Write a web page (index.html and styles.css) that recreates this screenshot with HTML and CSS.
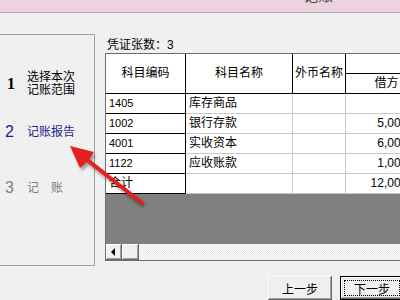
FILE: index.html
```html
<!DOCTYPE html>
<html lang="zh">
<head>
    <meta charset="UTF-8">
    <title>记账</title>
    <link rel="stylesheet" href="styles.css">
</head>
<body>
    <div class="titlebar">
        <span class="title-text">记账</span>
    </div>

    <div class="main">
        <div class="steps">
            <div class="step step-done">
                <span class="step-num num-serif">1</span>
                <span class="step-text">选择本次<br>记账范围</span>
            </div>
            <div class="step step-current">
                <span class="step-num">2</span>
                <span class="step-text">记账报告</span>
            </div>
            <div class="step step-todo">
                <span class="step-num">3</span>
                <span class="step-text">记　账</span>
            </div>
        </div>

        <div class="report">
            <div class="count-label">凭证张数：3</div>

            <div class="grid">
                <table class="voucher-table">
                    <thead>
                        <tr>
                            <th rowspan="2" class="col-code fixed">科目编码</th>
                            <th rowspan="2" class="col-name">科目名称</th>
                            <th rowspan="2" class="col-cur">外币名称</th>
                            <th colspan="2" class="col-amt-group">金额</th>
                        </tr>
                        <tr>
                            <th class="col-amt">借方</th>
                            <th class="col-amt">贷方</th>
                        </tr>
                    </thead>
                    <tbody>
                        <tr>
                            <td class="fixed num">1405</td>
                            <td>库存商品</td>
                            <td></td>
                            <td class="amount"></td>
                            <td class="amount">12,000.00</td>
                        </tr>
                        <tr>
                            <td class="fixed num">1002</td>
                            <td>银行存款</td>
                            <td></td>
                            <td class="amount">5,000.00</td>
                            <td class="amount"></td>
                        </tr>
                        <tr>
                            <td class="fixed num">4001</td>
                            <td>实收资本</td>
                            <td></td>
                            <td class="amount">6,000.00</td>
                            <td class="amount"></td>
                        </tr>
                        <tr>
                            <td class="fixed num">1122</td>
                            <td>应收账款</td>
                            <td></td>
                            <td class="amount">1,000.00</td>
                            <td class="amount"></td>
                        </tr>
                        <tr>
                            <td class="fixed">合计</td>
                            <td></td>
                            <td></td>
                            <td class="amount">12,000.00</td>
                            <td class="amount">12,000.00</td>
                        </tr>
                    </tbody>
                </table>
                <div class="grid-empty"></div>
                <div class="hscroll">
                    <span class="scroll-btn"><span class="arrow-left"></span></span>
                    <span class="scroll-thumb"></span>
                </div>
            </div>

            <div class="actions">
                <button type="button" class="btn">上一步</button>
                <button type="button" class="btn btn-default"><span class="focus-ring">下一步</span></button>
            </div>
        </div>
    </div>

    <!-- 标注箭头，叠加在页面上 -->
    <svg class="callout" width="400" height="300" viewBox="0 0 400 300">
        <defs>
            <filter id="soft" x="-20%" y="-20%" width="140%" height="140%">
                <feGaussianBlur stdDeviation="1.6"/>
            </filter>
        </defs>
        <g transform="translate(2 3)" fill="#000" opacity="0.35" filter="url(#soft)">
            <line x1="142" y1="203" x2="86" y2="159" stroke="#000" stroke-width="4.5"/>
            <polygon points="70,146 94,152 89,160 80,168"/>
        </g>
        <line x1="142" y1="203" x2="86" y2="159" stroke="#e3201e" stroke-width="4" stroke-linecap="round"/>
        <polygon points="70,146 94,152 89,160 80,168" fill="#e3201e"/>
    </svg>
</body>
</html>
```

FILE: styles.css
```css
:root {
    --window-bg: #F0F0F0;
    --title-bg: #ECD3DF;
    --title-border: #B4A6AD;
    --panel-border: #A0A0A0;
    --grid-line: #C8C8C8;
    --grid-dark: #000000;
    --grid-empty: #808080;
    --step-current: #1C1C8C;
    --step-todo: #808080;
    --cjk: "Liberation Sans", "Noto Sans CJK SC", sans-serif;
}

* {
    margin: 0;
    padding: 0;
    box-sizing: border-box;
}

body {
    width: 400px;
    height: 300px;
    overflow: hidden;
    position: relative;
    background: var(--window-bg);
    font-family: var(--cjk);
    font-size: 12px;
    color: #000;
}

/* 标题栏 */
.titlebar {
    height: 13px;
    background: var(--title-bg);
    border-bottom: 1px solid var(--title-border);
    padding-left: 303px;
    overflow: hidden;
}

.title-text {
    display: block;
    margin-top: -12px;
    font-size: 15px;
    line-height: 16px;
    color: #505050;
}

.main {
    display: flex;
    align-items: flex-start;
}

/* 左侧步骤 */
.steps {
    flex: none;
    width: 97px;
    height: 232px;
    margin-top: 21px;
    margin-left: -2px;
    border: 1px solid var(--panel-border);
    display: flex;
    flex-direction: column;
}

.step {
    display: flex;
    align-items: center;
    padding-left: 6px;
}

.step-done { margin-top: 36px; }
.step-current { margin-top: 27px; color: var(--step-current); }
.step-todo { margin-top: 40px; color: var(--step-todo); }

.step-num {
    width: 22px;
    font-family: "Liberation Sans", sans-serif;
    font-size: 16px;
    line-height: 16px;
}

.num-serif {
    font-family: "Liberation Serif", serif;
    font-weight: bold;
    padding-left: 2px;
}

.step-text {
    line-height: 13px;
}

/* 右侧报告 */
.report {
    flex: none;
    margin-left: 10px;
    margin-top: 24px;
}

.count-label {
    line-height: 16px;
    padding-left: 2px;
}

.grid {
    width: 520px;
    border: 1px solid #6E6E6E;
    background: #FFFFFF;
}

.voucher-table {
    border-collapse: separate;
    border-spacing: 0;
    table-layout: fixed;
}

.voucher-table th,
.voucher-table td {
    font-weight: normal;
    line-height: 19px;
    padding: 0 3px;
    white-space: nowrap;
    overflow: hidden;
    border-right: 1px solid var(--grid-line);
    border-bottom: 1px solid var(--grid-line);
}

.voucher-table th {
    text-align: center;
    border-color: var(--grid-dark);
}

.voucher-table th.col-cur {
    padding: 0;
}

.col-code { width: 80px; }
.col-name { width: 107px; }
.col-cur { width: 53px; }
.col-amt { width: 82px; }

.voucher-table td.fixed {
    border-color: var(--grid-dark);
}

.num {
    font-size: 11px;
}

.amount {
    text-align: right;
}

.grid-empty {
    height: 50px;
    background: var(--grid-empty);
}

/* 横向滚动条 */
.hscroll {
    height: 16px;
    display: flex;
    background: repeating-conic-gradient(#FFFFFF 0 25%, #E6E6E6 0 50%) 0 0 / 2px 2px;
}

.scroll-btn,
.scroll-thumb {
    display: flex;
    align-items: center;
    justify-content: center;
    width: 16px;
    height: 16px;
    background: var(--window-bg);
    box-shadow: inset -1px -1px #696969, inset 1px 1px #FFFFFF, inset -2px -2px #A0A0A0;
}

.scroll-thumb {
    width: 17px;
}

.arrow-left {
    width: 0;
    height: 0;
    border-top: 4px solid transparent;
    border-bottom: 4px solid transparent;
    border-right: 4px solid #000;
    margin-left: -2px;
}

/* 底部按钮 */
.actions {
    display: flex;
    gap: 8px;
    margin-top: 15px;
    padding-left: 163px;
}

.btn {
    flex: none;
    width: 64px;
    height: 24px;
    border: none;
    background: var(--window-bg);
    font-family: var(--cjk);
    font-size: 12px;
    color: #000;
    box-shadow: inset -1px -1px #696969, inset 1px 1px #FFFFFF, inset -2px -2px #A0A0A0, inset 2px 2px #E3E3E3;
}

.btn-default {
    border: 1px solid #000;
    padding: 3px;
}

.focus-ring {
    display: flex;
    align-items: center;
    justify-content: center;
    height: 100%;
    border: 1px dotted #000;
}

.callout {
    position: absolute;
    left: 0;
    top: 0;
    pointer-events: none;
}
```
